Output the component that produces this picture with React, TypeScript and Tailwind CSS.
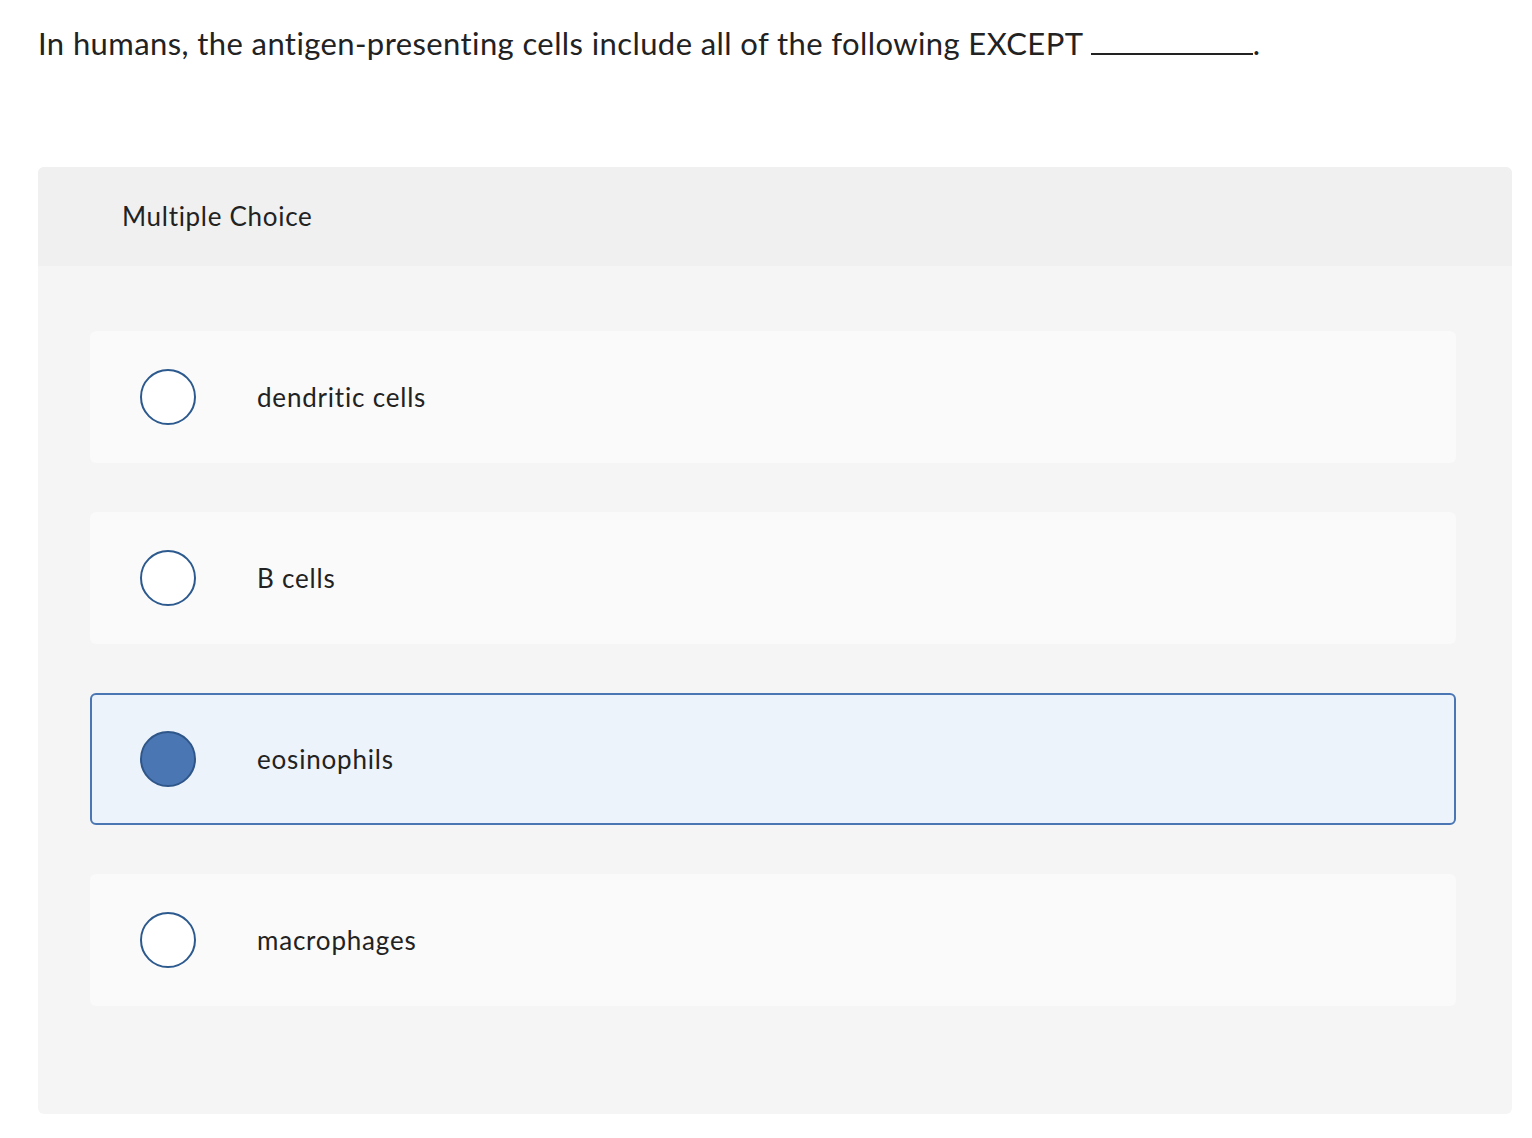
import React from 'react';

const options = [
  { label: 'dendritic cells', selected: false },
  { label: 'B cells', selected: false },
  { label: 'eosinophils', selected: true },
  { label: 'macrophages', selected: false },
];

function Radio({ checked }: { checked: boolean }) {
  return (
    <span
      className={
        checked
          ? 'w-[56px] h-[56px] rounded-full border-2 border-[#2f5689] bg-[#4a76b4] shrink-0'
          : 'w-[56px] h-[56px] rounded-full border-2 border-[#2d5a8e] bg-white shrink-0'
      }
    />
  );
}

export default function App() {
  return (
    <div className="min-h-screen bg-white text-[#222] font-['Lato',sans-serif]">
      <div className="pl-[38px] pr-[20px] pt-[24px]">
        <p className="text-[31px] leading-[38px] tracking-[0.4px]">
          In humans, the antigen-presenting cells include all of the following EXCEPT{' '}
          <span className="inline-block w-[162px] h-[3px] border-b-2 border-[#222] align-baseline"></span>.
        </p>

        <div className="mt-[105px] rounded-md bg-[#f5f5f5] overflow-hidden">
          <div className="h-[99px] bg-[#f0f0f0] flex items-center pl-[84px]">
            <h2 className="text-[26px] tracking-[0.7px]">Multiple Choice</h2>
          </div>
          <div className="px-[52px] pr-[56px] pt-[65px] pb-[108px] flex flex-col gap-[49px]">
            {options.map((o) => (
              <label
                key={o.label}
                className={
                  o.selected
                    ? 'h-[132px] rounded-md border-2 border-[#4a76b4] bg-[#ecf3fb] flex items-center pl-[48px]'
                    : 'h-[132px] rounded-md border-2 border-transparent bg-[#fafafa] flex items-center pl-[48px]'
                }
              >
                <Radio checked={o.selected} />
                <span className="ml-[61px] text-[26px] tracking-[0.8px]">{o.label}</span>
              </label>
            ))}
          </div>
        </div>
      </div>
    </div>
  );
}
